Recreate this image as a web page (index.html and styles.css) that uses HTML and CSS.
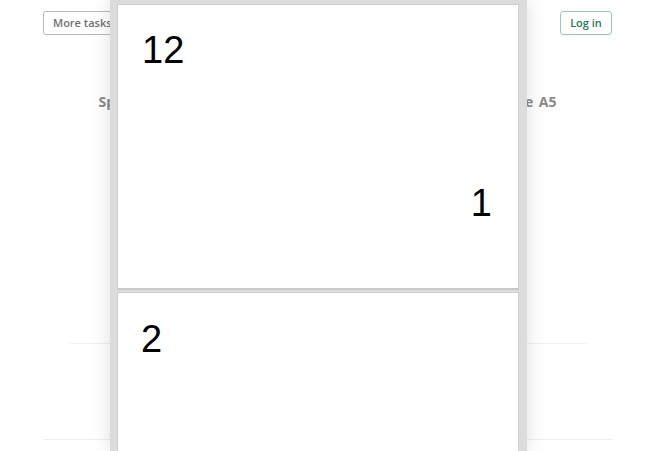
FILE: index.html
```html
<!DOCTYPE html>
<html lang="en">
<head>
<meta charset="utf-8">
<title>Preview</title>
<link rel="stylesheet" href="styles.css">
</head>
<body>
<div class="site">
  <header class="topbar">
    <button class="btn btn-more">More tasks</button>
    <button class="btn btn-login">Log in</button>
  </header>
  <h1 class="title">Split PDF pages down the middle to print as booklets of size A5</h1>
  <div class="rule rule-one"></div>
  <div class="rule rule-two"></div>
</div>
<div class="viewer">
  <div class="sheet">
    <div class="num">12</div>
    <div class="num num-right">1</div>
  </div>
  <div class="sheet sheet-two">
    <div class="num num-two">2</div>
  </div>
</div>
</body>
</html>
```
FILE: styles.css
```css
* { box-sizing: border-box; }
html, body { margin: 0; padding: 0; }
body {
  width: 655px;
  height: 451px;
  overflow: hidden;
  background: #ffffff;
  font-family: "Open Sans", "Liberation Sans", sans-serif;
  position: relative;
}
.site {
  display: flex;
  flex-direction: column;
  padding: 11px 43px 0 43px;
}
.topbar {
  display: flex;
  justify-content: space-between;
  align-items: center;
}
.btn {
  height: 24px;
  padding: 0 9px;
  background: #fff;
  border-radius: 3px;
  font-family: "Open Sans", "Liberation Sans", sans-serif;
  font-weight: 600;
  font-size: 11px;
  line-height: 22px;
}
.btn-more {
  border: 1px solid #b9b9b9;
  color: #6f6f6f;
  width: 80px;
  text-align: left;
}
.btn-login {
  border: 1px solid #8fd0b2;
  color: #1f7a55;
  width: 52px;
}
.title {
  align-self: center;
  width: 458px;
  margin: 57px 0 0 0;
  text-align: justify;
  text-align-last: justify;
  font-size: 14px;
  font-weight: 700;
  color: #8a8a8a;
  line-height: 19px;
}
.rule {
  height: 1px;
}
.rule-one {
  margin: 232px 25px 0 27px;
  background: #f1f1f1;
}
.rule-two {
  margin: 95px 0 0 0;
  background: #f2efe4;
}
.viewer {
  position: absolute;
  left: 110px;
  top: 0;
  width: 417px;
  height: 451px;
  overflow: hidden;
  background: #dcdcdc;
  box-shadow: 0 0 18px rgba(0, 0, 0, 0.13);
  padding: 4px 8px 0 7px;
  display: flex;
  flex-direction: column;
  gap: 2px;
}
.sheet {
  flex: none;
  height: 286px;
  background: #ffffff;
  border: 1px solid #cfcfcf;
  border-bottom: 2px solid #c8c8c8;
  padding: 26px 26px 0 24px;
  display: flex;
  flex-direction: column;
  font-family: "Liberation Sans", Arial, sans-serif;
  color: #000;
}
.sheet-two {
  height: 200px;
  padding-top: 27px;
  padding-left: 23px;
}
.num {
  font-size: 38px;
  line-height: 38px;
}
.num-right {
  align-self: flex-end;
  margin-top: 115px;
}
```
